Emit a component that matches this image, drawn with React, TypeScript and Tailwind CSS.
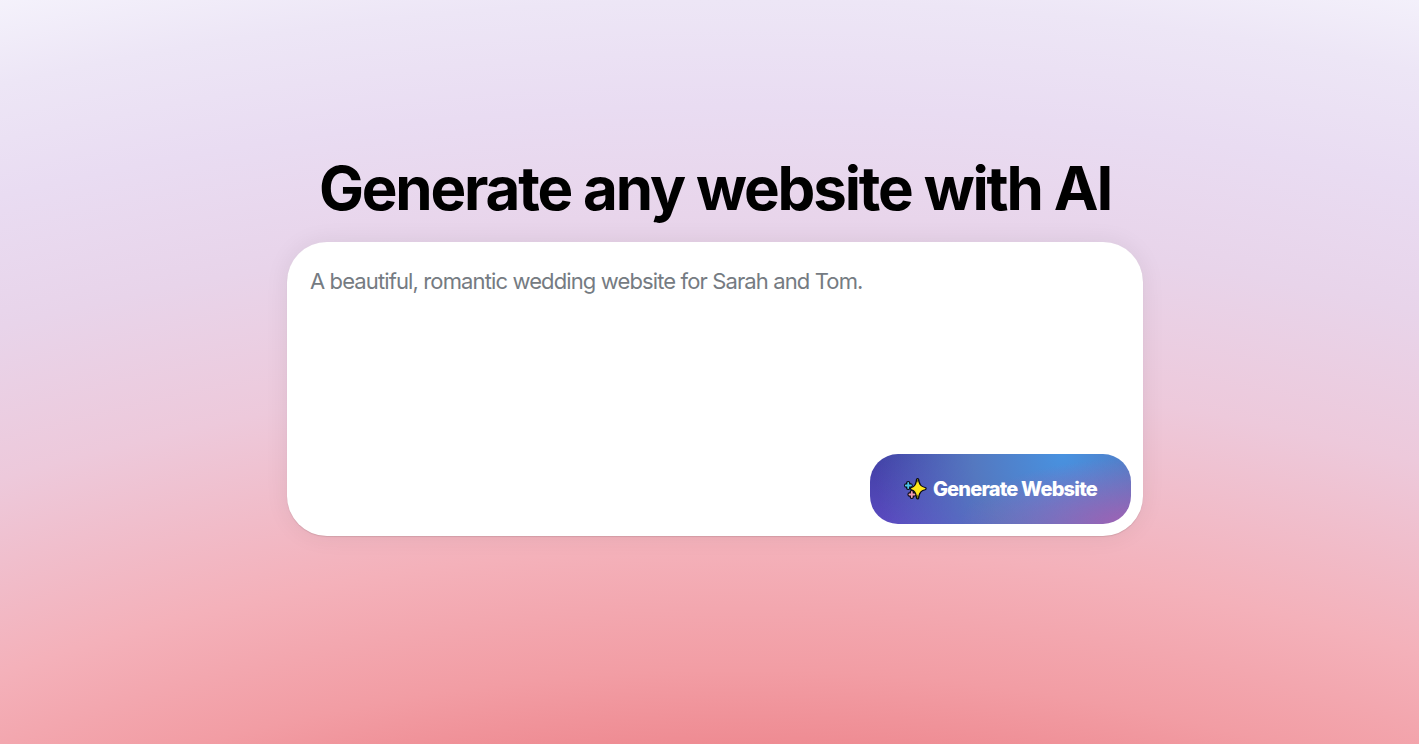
import { useState } from 'react';

const SparklesIcon = () => (
  <svg width="24" height="24" viewBox="0 0 24 24" aria-hidden="true" stroke="#0b0b12" strokeLinejoin="round" strokeLinecap="round">
    <g strokeWidth="4.4">
      <path d="M4.2 6.2V10.8M2.2 8.5H6.6" />
      <path d="M7.8 15.2V19.8M5.6 17.5H10" />
      <path
        d="M13.6 2.6Q14.4 10.6 21 11.6Q14.4 12.6 13.6 20.8Q12.8 12.6 7.6 11.6Q12.8 10.6 13.6 2.6z"
        strokeWidth="3.4"
      />
    </g>
    <path d="M4.2 6V11M1.8 8.5H7" stroke="#4cc3e8" strokeWidth="1.8" />
    <path d="M7.8 15V20M5.4 17.5H10.4" stroke="#f29bb0" strokeWidth="1.8" />
    <path
      d="M13.6 4.6Q14.6 10.4 20.8 11.6Q14.6 12.8 13.6 19Q12.6 12.8 7.8 11.6Q12.6 10.4 13.6 4.6z"
      fill="#ffe81a"
      stroke="#ffe81a"
      strokeWidth="1.4"
    />
    <path d="M13.6 2.4V5M13.6 18.2V20.8" stroke="#7d7414" strokeWidth="1" />
  </svg>
);

export default function App() {
  const [prompt, setPrompt] = useState('');

  return (
    <main className="min-h-screen flex flex-col items-center px-4 pt-38 font-['Inter',sans-serif] bg-[radial-gradient(170vw_1764px_at_52%_1764px,#ee888f_57%,#f29da4_62%,#f4b1ba_69%,#edc9db_79%,#e8d4ea_87%,#e9dcf2_94%,#ede6f6_100%,#f5f3fc_105%)]">
      <form className="w-full max-w-[856px] ml-[11px]" onSubmit={(e) => e.preventDefault()}>
        <h1 className="text-center text-[60px] leading-[72px] font-bold tracking-[-0.036em] text-black mb-[18px]">
          Generate any website with AI
        </h1>
        <div className="flex flex-col items-end bg-white rounded-[40px] p-3 shadow-[0_1px_1px_rgba(0,0,0,0.1),0_0_24px_rgba(0,0,0,0.07)]">
          <textarea
            aria-label="Website description"
            value={prompt}
            onChange={(e) => setPrompt(e.target.value)}
            placeholder="A beautiful, romantic wedding website for Sarah and Tom."
            className="block w-full h-[200px] px-[11px] py-3 resize-none outline-none bg-transparent text-[22px] leading-[30px] tracking-[-0.04em] text-gray-900 placeholder:text-[#757b82]"
          />
          <button
            type="submit"
            className="flex items-center gap-[5px] h-[70px] px-[34px] rounded-[28px] text-xl font-extrabold tracking-[-0.04em] text-white bg-[radial-gradient(170px_65px_at_100%_100%,#a062b4,transparent),radial-gradient(circle_at_74%_0%,#4892e0,#5478c0_90px,transparent_190px),linear-gradient(170deg,#4040a4,#6a50d0)]"
          >
            <SparklesIcon />
            Generate Website
          </button>
        </div>
      </form>
    </main>
  );
}
